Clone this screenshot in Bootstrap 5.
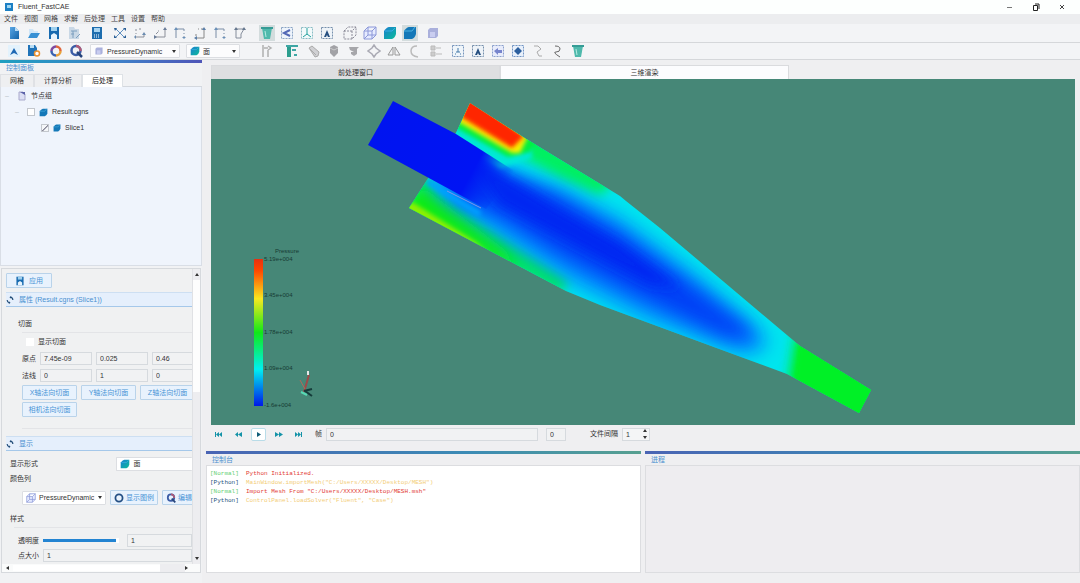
<!DOCTYPE html>
<html lang="zh-CN">
<head>
<meta charset="utf-8">
<meta name="viewport" content="width=device-width, initial-scale=1">
<title>Fluent_FastCAE</title>
<link rel="stylesheet" href="https://cdn.jsdelivr.net/npm/bootstrap@5.3.0/dist/css/bootstrap.min.css">
<script src="https://cdn.jsdelivr.net/npm/bootstrap@5.3.0/dist/js/bootstrap.bundle.min.js"></script>
<style>
body{font-family:"Liberation Sans","Noto Sans CJK SC",sans-serif;font-size:7px;line-height:10px;color:#333;background:#efeff1}
.app{min-height:100vh}
button,input,select{font-family:inherit;font-size:7px;line-height:9px;color:#333}
svg{display:block;flex:none}
.titlebar{height:14px;background:#fdfffe;padding:0 4px}
.titlebar .wbtn{width:26px;height:14px;border:0;background:none;padding:0 8px}
.menubar{height:10px;background:#ecedef;padding-left:4px;gap:6px}
.menubar a{color:#444;text-decoration:none}
.tools{background:#f3f4f6;border-bottom:1px solid #d5d7da;padding-left:6px;gap:7px}
.tools-a{height:19px}
.tools-b{height:17px;gap:6px}
.tgroup{display:flex;gap:4px}
.tb{width:16px;height:16px;padding:1px;border:0;background:none}
.tb svg{width:14px;height:14px}
.tb.on{background:#d3dcdd}
.pick{height:14px;border:1px solid #dcdee2;background:#fcfcfd;border-radius:1px;padding:0 3px;gap:3px}
.pick svg{width:10px;height:10px}
.pick select{appearance:none;border:0;background:transparent;flex:1;min-width:0;padding:0;height:12px}
.caret{width:0;height:0;border:2px solid transparent;border-top:3px solid #333;border-bottom:0}
.side{width:202px;background:#f1f2f4}
.side-line{height:3px;background:linear-gradient(90deg,#1e9fc0,#3f7fc8 60%,#4f55b8)}
.ptitle{color:#4a8fd0;height:11px;padding-left:6px}
.side .nav-tabs{border-color:#d4d8de;height:13px}
.side .nav-link{font-size:7px;line-height:10px;padding:1px 9px;border:1px solid #dfe1e5;border-bottom:0;border-radius:0;color:#333;background:#eeeff1}
.side .nav-link.active{background:#fff;color:#222}
.tree{height:179px;background:#eff4fc;border:1px solid #d9dee6;border-top:0;padding-top:1px}
.trow{height:16px;gap:4px}
.trow .tw{color:#b9bfc8;width:8px}
.trow label{font-size:7px}
.box{width:8px;height:8px;margin:0;border:1px solid #c3c7cd;background:#fff;appearance:none;border-radius:0}
.box:checked{background:#f4f6f8 linear-gradient(135deg,transparent 46%,#889 47%,#889 58%,transparent 59%)}
.props{margin:2px 1px 10px 1px;border:1px solid #d6d9dd;background:#f0f1f2}
.pcontent{overflow:hidden;padding:4px 0 0 4px;min-width:0}
.phead{height:15px;background:#e5effc;border-top:1px solid #cddff2;border-bottom:1px solid #a5c8ea;color:#4a8fd0;gap:5px}
.bbtn{height:15px;border:1px solid #b9d3ea;background:#e8f2fd;color:#4994d6;padding:0 3px;flex:none;border-radius:1px;display:flex;align-items:center;justify-content:center;gap:2px;white-space:nowrap}
.bbtn svg{width:10px;height:10px}
.apply{width:46px;gap:4px}
.axis{width:55px;padding:0}
.prow{height:17px;gap:4px;white-space:nowrap}
.prow-s{height:13px}
.fld{height:13px;border:1px solid #d6dade;background:#f1f2f3;padding:0 3px;min-width:0;border-radius:0}
.fld3{width:52px;flex:none}
.grp{border-top:1px solid #e3e4e7}
.grp-end{height:8px;margin-top:10px}
.vbar{width:8px;background:#ededf0;border-left:1px solid #e0e1e4}
.vbar .thumb{flex:0 0 112px;background:#fdfdfd}
.hbar{height:8px;background:#fafbfb;padding:0 4px}
.hbar .thumb{height:6px;flex:0 0 147px;background:#fff}
.up{width:0;height:0;border:2px solid transparent;border-bottom:3px solid #333;border-top:0}
.lf{border:2px solid transparent;border-right:3px solid #333;border-left:0}
.rt{border:2px solid transparent;border-left:3px solid #333;border-right:0}
.slide{appearance:none;height:12px;width:76px;margin:0;background:transparent}
.slide::-webkit-slider-runnable-track{height:3px;background:#2384d2}
.slide::-webkit-slider-thumb{appearance:none;width:3px;height:5px;margin-top:-1px;background:#fff}
.work{padding:5px 0 10px 4px;min-width:0}
.views{height:14px;margin:0 5px}
.views button{width:289px;border:1px solid #dadbde;border-bottom:0;background:#dedfe1;text-align:center;padding:0}
.views button.on{background:#fcfcfe}
.scene{background:#468777;margin:0 5px;overflow:hidden;min-height:0}
.scene svg{width:100%;height:100%}
.scene text{font-size:6px;fill:#173b34}
.player{height:18px;padding-left:5px;gap:0}
.pl{width:15px;height:13px;margin-right:5px;border:0;background:none;padding:2px 3px;border-radius:2px}
.pl.on{background:#fff;border:1px solid #b9dce8;padding:1px 2px}
.pl svg{width:9px;height:9px}
.spin{height:13px;width:28px;border:1px solid #d6dade;background:#f4f5f6;padding-right:2px}
.spin input{border:0;background:none;width:20px;height:11px;padding:0 3px}
.dock{border:0;border-top:3px solid;border-image:linear-gradient(90deg,#4a64b4,#3b8bb5 60%,#57a090) 1}
.dock h2{font-size:7px;line-height:11px;height:11px;margin:0;padding-left:6px;color:#4a8fd0;font-weight:400}
.log{height:108px;background:#fff;border:1px solid #dcdde0;font-family:"Liberation Mono",monospace;font-size:6px;line-height:9px;padding:3px 0 0 3px;white-space:pre;overflow:hidden}
.info{height:108px;background:#eeedf0;border:1px solid #dcdde0}
.ok{color:#63cf70}.py{color:#23527c}.er{color:#e23a32}.wa{color:#f3cd76}
</style>
</head>
<body>
<svg width="0" height="0" class="position-absolute" aria-hidden="true">
<defs>
<linearGradient id="gb" x1="0" y1="0" x2="1" y2="1"><stop stop-color="#59a7e6"/><stop offset="1" stop-color="#1263a8"/></linearGradient>
<linearGradient id="gt" x1="0" y1="0" x2="1" y2="1"><stop stop-color="#1b7fd0"/><stop offset="1" stop-color="#0bbb9a"/></linearGradient>
<symbol id="i-new" viewBox="0 0 14 14"><path d="M3 1h5l4 4v8H3z" fill="url(#gb)"/><path d="M8 1v4h4z" fill="#b9dcf5"/></symbol>
<symbol id="i-open" viewBox="0 0 14 14"><path d="M2 12V3h4l1 2h4v2H5z" fill="#cfe6f8"/><path d="M1 12l3-5h9l-3 5z" fill="#3790d4"/></symbol>
<symbol id="i-save" viewBox="0 0 14 14"><path d="M2 1h10v12H2z" fill="#176ab0"/><path d="M4 1h6v4H4z" fill="#9fd0ee"/><path d="M4 9l3-2 3 2v4H4z" fill="#e8f4fd"/></symbol>
<symbol id="i-imp" viewBox="0 0 14 14"><path d="M2 1h5l1 2h4v10H2z" fill="#c9d8e6"/><path d="M4 5h6M4 8h3M9 12l4-4M6 12V5" stroke="#7d9fbf" fill="none"/></symbol>
<symbol id="i-calc" viewBox="0 0 14 14"><path d="M2 1h10v12H2z" fill="#1d6dae"/><path d="M4 2h6v4H4z" fill="#a5d3f0"/><path d="M4 9h6M4 11h6" stroke="#fff" stroke-dasharray="1 1"/></symbol>
<symbol id="i-fit" viewBox="0 0 14 14"><path d="M3 3l8 8M11 3l-8 8" stroke="#5f8fc0"/><path d="M1 2h3L2 5zM13 2v3l-3-3zM1 12V9l3 3zM13 12h-3l3-3z" fill="#2b5f96"/></symbol>
<symbol id="i-ax1" viewBox="0 0 14 14"><path d="M3 3v2m0 2v1M6 3h2M2 11h9V8" stroke="#8b8f99" fill="none"/><path d="M1 11l2-2v4zM11 6l2 3H9z" fill="#6a8bb0"/></symbol>
<symbol id="i-ax2" viewBox="0 0 14 14"><path d="M2 11h10V3M5 5h1M3 8l2-2" stroke="#8b8f99" fill="none"/><path d="M1 9v4l3-2zM10 4l2-3 2 3z" fill="#697c98"/></symbol>
<symbol id="i-ax3" viewBox="0 0 14 14"><path d="M3 12V3h8v2M11 7v1M11 10v2" stroke="#7b8da6" fill="none"/><path d="M1 4l2-3 2 3zM9 11h4l-2 2z" fill="#6a90b8"/></symbol>
<symbol id="i-ax4" viewBox="0 0 14 14"><path d="M3 12h8V3H8M6 3H5M3 8v2" stroke="#888" fill="none"/><path d="M9 4l2-3 2 3zM1 12l3-2v4z" fill="#5c7fa8"/></symbol>
<symbol id="i-ax5" viewBox="0 0 14 14"><path d="M3 12V3h8L8 8v4H3" stroke="#858d9b" fill="none"/><path d="M1 4l2-3 2 3zM11 1l2 3h-4z" fill="#66788f"/></symbol>
<symbol id="i-bin" viewBox="0 0 14 14"><path d="M2 2h10l-2 11H4z" fill="#4fb9ac"/><path d="M1 1h12v2H1z" fill="#369c96"/><path d="M5 5l1 6" stroke="#b5ece2"/></symbol>
<symbol id="i-selv" viewBox="0 0 14 14"><rect x="1.500" y="1.500" width="11" height="11" fill="#edf3fb" stroke="#8aa4c4" stroke-dasharray="2 1"/><path d="M10 4L4 7l6 3" stroke="#5268b6" fill="none" stroke-width="2"/></symbol>
<symbol id="i-sela" viewBox="0 0 14 14"><rect x="1.500" y="1.500" width="11" height="11" fill="#f2fafb" stroke="#8abcc4" stroke-dasharray="2 1"/><path d="M7 2v6L3 11M7 8l4 3" stroke="#20a09c" fill="none"/></symbol>
<symbol id="i-selp" viewBox="0 0 14 14"><rect x="1.500" y="1.500" width="11" height="11" fill="#eff5fa" stroke="#7795bd" stroke-dasharray="2 1"/><path d="M7 4v4M5 8h4M4 10h1M9 10h1" stroke="#4278a8" fill="none"/></symbol>
<symbol id="i-selb" viewBox="0 0 14 14"><rect x="1.500" y="1.500" width="11" height="11" fill="#eef3f8" stroke="#7790ad" stroke-dasharray="2 1"/><path d="M4 11l3-7 3 7H8L7 9l-1 2z" fill="#264f80"/></symbol>
<symbol id="i-sels" viewBox="0 0 14 14"><rect x="1.500" y="1.500" width="11" height="11" fill="#e8ecfb" stroke="#8aa0cd" stroke-dasharray="2 1"/><path d="M3 7l4-3v2h4v3H7v2z" fill="#7784cc"/></symbol>
<symbol id="i-selx" viewBox="0 0 14 14"><rect x="1.500" y="1.500" width="11" height="11" fill="#e8f0fb" stroke="#7195c4" stroke-dasharray="2 1"/><path d="M7 3l2 2 2 2-2 2-2 2-2-2-2-2 2-2z" fill="#2c5f9e"/></symbol>
<symbol id="i-wire" viewBox="0 0 14 14"><path d="M1 5l4-4h8v8l-4 4H1zM1 5h8l4-4M9 5v8" fill="none" stroke="#8b8b98" stroke-dasharray="2 1"/></symbol>
<symbol id="i-edge" viewBox="0 0 14 14"><path d="M1 5l4-4h8v8l-4 4H1zM1 5h8l4-4M9 5v8M5 1v8l-4 4M5 9h8" fill="#e6ebff" stroke="#8c98d8"/></symbol>
<symbol id="i-solid" viewBox="0 0 14 14"><path d="M1 5q3-4 5-4h7v7q-1 4-4 5H1z" fill="url(#gt)"/><path d="M2 5h7l3-3" stroke="#3aaee4" fill="none"/></symbol>
<symbol id="i-blue" viewBox="0 0 14 14"><path d="M1 5q3-4 5-4h7v7q-1 4-4 5H1z" fill="#1478b8"/><path d="M1 5h8l3-4" stroke="#4bb0e0" fill="none"/></symbol>
<symbol id="i-pale" viewBox="0 0 14 14"><path d="M2 4l2-2h8v8l-2 2H2z" fill="#aab0dc"/><path d="M4 6h5v5H4z" fill="#c9cdf0"/></symbol>
<symbol id="i-tri" viewBox="0 0 14 14"><path d="M1 1h12v12H1z" fill="#e3f2fc"/><path d="M3 11l4-7 4 7-4-2z" fill="#1e68b4"/></symbol>
<symbol id="i-sgear" viewBox="0 0 14 14"><path d="M1 1h7l2 3v8H1z" fill="#2073b8"/><path d="M3 1h4v3H3z" fill="#b9ddf4"/><circle cx="10" cy="9.500" r="2.500" fill="#fff" stroke="#e99131" stroke-width="1.500"/></symbol>
<symbol id="i-ring" viewBox="0 0 14 14"><g fill="none" stroke-width="2.500"><path d="M7 2.500A4.500 4.500 0 0 1 11.500 7" stroke="#e0673c"/><path d="M11.500 7A4.500 4.500 0 0 1 7 11.500" stroke="#e9a13a"/><path d="M7 11.500A4.500 4.500 0 0 1 2.500 7" stroke="#3a62b0"/><path d="M2.500 7A4.500 4.500 0 0 1 7 2.500" stroke="#7c4aa0"/></g></symbol>
<symbol id="i-ringq" viewBox="0 0 14 14"><circle cx="7" cy="6.500" r="4.500" fill="none" stroke="#3c5da6" stroke-width="2.500"/><path d="M7 2A4.500 4.500 0 0 1 11.500 7" stroke="#b15a76" fill="none" stroke-width="2.500"/><path d="M8 8l5 5" stroke="#26457c" stroke-width="2.500"/></symbol>
<symbol id="i-g1" viewBox="0 0 14 14"><path d="M4 1v12M5 4h4M9 2l3 2-3 2M9 6v7" stroke="#b0b0b0" fill="none" stroke-width="1.500"/></symbol>
<symbol id="i-g2" viewBox="0 0 14 14"><path d="M2 2h4v11H2z" fill="#2c9e8e"/><path d="M1 2h12M7 6h4M9 11h3" stroke="#3fa6a4" stroke-width="2"/></symbol>
<symbol id="i-g3" viewBox="0 0 14 14"><path d="M2 4l3-2 7 6-1 4-3 1z" fill="#d0d0d3" stroke="#aaa"/><path d="M3 5l6 6" stroke="#aaa"/></symbol>
<symbol id="i-g4" viewBox="0 0 14 14"><path d="M3 3l4-2 4 2v6l-4 4-4-4z" fill="#a2a2a6"/><path d="M3 4l4 2 4-2" stroke="#ccc" fill="none"/></symbol>
<symbol id="i-g5" viewBox="0 0 14 14"><path d="M2 3h10L10 5v5l-3 2-3-2V8h3L3 6z" fill="#a6a6aa"/></symbol>
<symbol id="i-g6" viewBox="0 0 14 14"><path d="M7 1l2 3 4 3-4 3-2 3-2-3-4-3 4-3z" fill="none" stroke="#aaaab4" stroke-width="1.500"/></symbol>
<symbol id="i-g7" viewBox="0 0 14 14"><path d="M1 11l5-8v8zM8 3l5 8H8z" fill="none" stroke="#999"/></symbol>
<symbol id="i-g8" viewBox="0 0 14 14"><path d="M10 2Q4 2 4 7t7 6" fill="none" stroke="#bbb" stroke-width="1.500"/></symbol>
<symbol id="i-g9" viewBox="0 0 14 14"><path d="M2 2h4v4H2zM2 8h4v4H2zM7 4h5M7 10h6" fill="#ccc" stroke="#bbb"/></symbol>
<symbol id="i-cv1" viewBox="0 0 14 14"><path d="M3 2h4l3 3-4 3 2 4h3" fill="none" stroke="#aaa"/></symbol>
<symbol id="i-cv2" viewBox="0 0 14 14"><path d="M4 2q5 0 5 3T5 8t4 5" fill="none" stroke="#666"/></symbol>
<symbol id="i-sync" viewBox="0 0 14 14"><path d="M2 7q0 4 4 5M12 7q0-4-4-5" fill="none" stroke="#234d78" stroke-width="2"/><path d="M5 9v5l3-2zM9 0v5L6 2z" fill="#234d78"/></symbol>
<symbol id="i-o" viewBox="0 0 14 14"><circle cx="7" cy="7" r="5" fill="none" stroke="#234f84" stroke-width="2.500"/></symbol>
</defs>
</svg>

<div class="app d-flex flex-column">
<header>
 <div class="titlebar d-flex align-items-center">
  <svg width="10" height="10" viewBox="0 0 10 10"><path d="M1 1h8v8H1z" fill="#1b80c4"/><path d="M3 3h4v3H3z" fill="#9ed7f2"/></svg>
  <span class="ms-1 flex-grow-1">Fluent_FastCAE</span>
  <button class="wbtn" aria-label="最小化"><svg width="8" height="8"><path d="M1 4.500h5" stroke="#777"/></svg></button>
  <button class="wbtn" aria-label="还原"><svg width="8" height="8"><path d="M1.500 2.500h4v5h-4zM3 1h4v5" stroke="#222" fill="none"/></svg></button>
  <button class="wbtn" aria-label="关闭"><svg width="8" height="8"><path d="M2 2l4 4M6 2L2 6" stroke="#444"/></svg></button>
 </div>
 <nav class="menubar d-flex align-items-center">
  <a href="#">文件</a><a href="#">视图</a><a href="#">网格</a><a href="#">求解</a><a href="#">后处理</a><a href="#">工具</a><a href="#">设置</a><a href="#">帮助</a>
 </nav>
 <div class="tools tools-a d-flex align-items-center">
  <div class="tgroup">
   <button class="tb" aria-label="新建"><svg><use href="#i-new"/></svg></button>
   <button class="tb" aria-label="打开"><svg><use href="#i-open"/></svg></button>
   <button class="tb" aria-label="保存"><svg><use href="#i-save"/></svg></button>
   <button class="tb" aria-label="导入"><svg><use href="#i-imp"/></svg></button>
  </div>
  <div class="tgroup"><button class="tb" aria-label="求解"><svg><use href="#i-calc"/></svg></button></div>
  <div class="tgroup">
   <button class="tb" aria-label="适应窗口"><svg><use href="#i-fit"/></svg></button>
   <button class="tb" aria-label="前视图"><svg><use href="#i-ax1"/></svg></button>
   <button class="tb" aria-label="后视图"><svg><use href="#i-ax2"/></svg></button>
   <button class="tb" aria-label="左视图"><svg><use href="#i-ax3"/></svg></button>
   <button class="tb" aria-label="右视图"><svg><use href="#i-ax4"/></svg></button>
   <button class="tb" aria-label="俯视图"><svg><use href="#i-ax3"/></svg></button>
   <button class="tb" aria-label="仰视图"><svg><use href="#i-ax5"/></svg></button>
  </div>
  <div class="tgroup ms-1">
   <button class="tb on" aria-label="清除选择"><svg><use href="#i-bin"/></svg></button>
   <button class="tb" aria-label="选择点"><svg><use href="#i-selv"/></svg></button>
   <button class="tb" aria-label="选择线"><svg><use href="#i-sela"/></svg></button>
   <button class="tb" aria-label="选择面"><svg><use href="#i-selb"/></svg></button>
  </div>
  <div class="tgroup">
   <button class="tb" aria-label="线框"><svg><use href="#i-wire"/></svg></button>
   <button class="tb" aria-label="边"><svg><use href="#i-edge"/></svg></button>
   <button class="tb" aria-label="面"><svg><use href="#i-solid"/></svg></button>
   <button class="tb on" aria-label="面和边"><svg><use href="#i-blue"/></svg></button>
  </div>
  <div class="tgroup"><button class="tb" aria-label="透明"><svg><use href="#i-pale"/></svg></button></div>
 </div>
 <div class="tools tools-b d-flex align-items-center">
  <div class="tgroup">
   <button class="tb" aria-label="导入结果"><svg><use href="#i-tri"/></svg></button>
   <button class="tb" aria-label="保存设置"><svg><use href="#i-sgear"/></svg></button>
  </div>
  <div class="tgroup">
   <button class="tb" aria-label="图例"><svg><use href="#i-ring"/></svg></button>
   <button class="tb" aria-label="编辑图例"><svg><use href="#i-ringq"/></svg></button>
  </div>
  <div class="pick d-flex align-items-center" style="width:90px"><svg><use href="#i-pale"/></svg><select aria-label="变量"><option>PressureDynamic</option></select><i class="caret"></i></div>
  <div class="pick d-flex align-items-center" style="width:54px"><svg><use href="#i-solid"/></svg><select aria-label="显示方式"><option>面</option></select><i class="caret"></i></div>
  <div class="tgroup ms-2 ps-1"><button class="tb" aria-label="探针"><svg><use href="#i-g1"/></svg></button></div>
  <div class="tgroup ms-1"><button class="tb" aria-label="计算器"><svg><use href="#i-g2"/></svg></button></div>
  <div class="tgroup">
   <button class="tb" aria-label="裁剪"><svg><use href="#i-g3"/></svg></button>
   <button class="tb" aria-label="切面"><svg><use href="#i-g4"/></svg></button>
   <button class="tb" aria-label="等值面"><svg><use href="#i-g5"/></svg></button>
   <button class="tb" aria-label="矢量"><svg><use href="#i-g6"/></svg></button>
   <button class="tb" aria-label="镜像"><svg><use href="#i-g7"/></svg></button>
   <button class="tb" aria-label="流线"><svg><use href="#i-g8"/></svg></button>
  </div>
  <div class="tgroup"><button class="tb" aria-label="组合"><svg><use href="#i-g9"/></svg></button></div>
  <div class="tgroup">
   <button class="tb" aria-label="选点"><svg><use href="#i-selp"/></svg></button>
   <button class="tb" aria-label="选单元"><svg><use href="#i-selb"/></svg></button>
   <button class="tb" aria-label="框选"><svg><use href="#i-sels"/></svg></button>
   <button class="tb" aria-label="框选单元"><svg><use href="#i-selx"/></svg></button>
   <button class="tb" aria-label="折线"><svg><use href="#i-cv1"/></svg></button>
   <button class="tb" aria-label="曲线"><svg><use href="#i-cv2"/></svg></button>
   <button class="tb" aria-label="清除"><svg><use href="#i-bin"/></svg></button>
  </div>
 </div>
</header>

<div class="d-flex flex-grow-1">
<aside class="side d-flex flex-column flex-shrink-0">
 <div class="side-line"></div>
 <div class="ptitle">控制面板</div>
 <ul class="nav nav-tabs">
  <li class="nav-item"><a class="nav-link" href="#">网格</a></li>
  <li class="nav-item"><a class="nav-link" href="#">计算分析</a></li>
  <li class="nav-item"><a class="nav-link active" href="#">后处理</a></li>
 </ul>
 <div class="tree">
  <div class="trow d-flex align-items-center ps-1"><span class="tw">–</span>
   <svg width="10" height="10" viewBox="0 0 10 10"><path d="M2 1h4l2 2v6H2z" fill="#dcdff4" stroke="#a9a9cc"/><path d="M3 1h5v3z" fill="#5b62a8"/></svg><span>节点组</span></div>
  <div class="trow d-flex align-items-center" style="padding-left:14px"><span class="tw">–</span>
   <input class="box" type="checkbox" id="c1"><svg width="9" height="9"><use href="#i-blue"/></svg><label for="c1">Result.cgns</label></div>
  <div class="trow d-flex align-items-center" style="padding-left:40px">
   <input class="box" type="checkbox" id="c2" checked><svg width="8" height="8"><use href="#i-blue"/></svg><label for="c2">Slice1</label></div>
 </div>
 <div class="props flex-grow-1 d-flex flex-column">
  <div class="d-flex flex-grow-1">
   <div class="pcontent flex-grow-1">
    <button class="bbtn apply"><svg><use href="#i-save"/></svg>应用</button>
    <div class="phead d-flex align-items-center mt-1 mb-2"><svg width="8" height="8"><use href="#i-sync"/></svg><span>属性 (Result.cgns (Slice1))</span></div>
    <div class="prow d-flex align-items-center ps-2 ms-1">切面</div>
    <div class="grp ms-3">
     <div class="prow d-flex align-items-center"><input class="box border-0 ms-1" type="checkbox" id="c3"><label for="c3">显示切面</label></div>
     <div class="prow d-flex align-items-center"><label for="o1">原点</label><input id="o1" class="fld fld3" value="7.45e-09"><input aria-label="原点 Y" class="fld fld3" value="0.025"><input aria-label="原点 Z" class="fld fld3" value="0.46"></div>
     <div class="prow d-flex align-items-center"><label for="n1">法线</label><input id="n1" class="fld fld3" value="0"><input aria-label="法线 Y" class="fld fld3" value="1"><input aria-label="法线 Z" class="fld fld3" value="0"></div>
     <div class="prow d-flex align-items-center"><button class="bbtn axis">X轴法向切面</button><button class="bbtn axis">Y轴法向切面</button><button class="bbtn axis">Z轴法向切面</button></div>
     <div class="prow d-flex align-items-center"><button class="bbtn axis">相机法向切面</button></div>
    </div>
    <div class="grp grp-end ms-3"></div>
    <div class="phead d-flex align-items-center mb-1"><svg width="8" height="8"><use href="#i-sync"/></svg><span>显示</span></div>
    <div class="prow d-flex align-items-center ps-1"><label for="s1" class="flex-grow-1">显示形式</label><div class="pick bg-white d-flex align-items-center border-end-0" style="width:76px"><svg><use href="#i-solid"/></svg><select id="s1"><option>面</option></select></div></div>
    <div class="prow prow-s d-flex align-items-center ps-1"><label for="s2">颜色列</label></div>
    <div class="prow d-flex align-items-center my-1 ps-3"><div class="pick bg-white d-flex align-items-center flex-shrink-0" style="width:84px"><svg><use href="#i-edge"/></svg><select id="s2"><option>PressureDynamic</option></select><i class="caret"></i></div>
     <button class="bbtn"><svg><use href="#i-o"/></svg>显示图例</button><button class="bbtn"><svg><use href="#i-ringq"/></svg>编辑</button></div>
    <div class="prow d-flex align-items-center ps-1">样式</div>
    <div class="grp ms-2 ps-1">
    <div class="prow d-flex align-items-center mt-1"><label for="r1">透明度</label><input class="slide" id="r1" type="range" value="100"><input aria-label="透明度值" class="fld flex-grow-1 ms-1" value="1" size="4"></div>
    <div class="prow prow-s d-flex align-items-center"><label for="p1">点大小</label><input id="p1" class="fld flex-grow-1" value="1"></div>
    </div>
   </div>
   <div class="vbar d-flex flex-column align-items-center"><i class="up my-1"></i><div class="thumb w-100"></div><div class="flex-grow-1"></div><i class="caret mb-1"></i></div>
  </div>
  <div class="hbar d-flex align-items-center"><i class="lf me-1"></i><div class="thumb"></div><div class="flex-grow-1 align-self-stretch" style="background:#ededf0"></div><i class="rt me-2"></i></div>
 </div>
</aside>

<main class="work flex-grow-1 d-flex flex-column">
 <div class="views d-flex"><button>前处理窗口</button><button class="on">三维渲染</button></div>
 <div class="scene flex-fill d-flex">
 <svg viewBox="211 79 864 346" preserveAspectRatio="xMidYMid meet" role="img" aria-label="Pressure 云图">
  <defs>
   <clipPath id="body"><path d="M470 103L523 137L620 196L626 201L660 228L800 346L871 390L859 413L787 374L600 305L566 291L409 208L427 180L456 133Z"/></clipPath>
   <filter id="b2" x="-20%" y="-20%" width="140%" height="140%"><feGaussianBlur stdDeviation="2"/></filter>
   <filter id="b5" x="-30%" y="-30%" width="160%" height="160%"><feGaussianBlur stdDeviation="6"/></filter>
   <filter id="b7" x="-30%" y="-30%" width="160%" height="160%"><feGaussianBlur stdDeviation="9"/></filter>
   <filter id="b9" x="-30%" y="-30%" width="160%" height="160%"><feGaussianBlur stdDeviation="10"/></filter>
   <linearGradient id="tube" gradientUnits="userSpaceOnUse" x1="380" y1="122" x2="515" y2="196"><stop stop-color="#0014f0"/><stop offset=".68" stop-color="#0014f4"/><stop offset=".92" stop-color="#0028f0" stop-opacity="0"/></linearGradient>
   <linearGradient id="rain" x1="0" y1="0" x2="0" y2="1"><stop stop-color="#e83010"/><stop offset=".08" stop-color="#ff4800"/><stop offset=".27" stop-color="#f8e820"/><stop offset=".5" stop-color="#10e818"/><stop offset=".75" stop-color="#00f0f0"/><stop offset="1" stop-color="#0018e8"/></linearGradient>
  </defs>
  <g clip-path="url(#body)">
   <path d="M380 90H890V430H380z" fill="#00e6ee"/>
   <path d="M420 174L404 208L560 294L570 280L490 226L450 200z" fill="#00ec50" filter="url(#b5)"/>
   <path d="M424 188L404 208L520 272L505 250z" fill="#10ee10" filter="url(#b5)"/>
   <path d="M412 202L404 208L495 260L476 242z" fill="#90f000" filter="url(#b2)"/>
   <path d="M510 150L520 120L615 180L600 196L560 178z" fill="#00f060" filter="url(#b5)"/>
   <path d="M440 150L500 170L560 188L620 218L690 270L755 325L770 345L745 356L650 322L570 282L500 238L430 190z" fill="#0090ff" filter="url(#b9)"/>
   <path d="M455 150L505 172L560 196L620 232L690 283L745 325L756 342L725 338L640 298L560 256L500 218L455 198z" fill="#0040f6" filter="url(#b7)"/>
   <path d="M465 155L510 180L560 210L620 244L680 288L650 284L560 236L500 204z" fill="#0028f2" filter="url(#b5)"/>
   <path d="M464 114L452 136L500 168L532 158L530 130z" fill="#00e8d8" filter="url(#b2)"/>
   <path d="M464 108L455 127L508 157L530 152L540 138z" fill="#00f040" filter="url(#b2)"/>
   <path d="M466 100L457 121L512 153L520 153L528 136z" fill="#f8f000" filter="url(#b2)"/>
   <path d="M466 92L461 117L512 148L524 136z" fill="#ff2800" filter="url(#b2)"/>
   <path d="M796 332L788 384L870 425L885 385z" fill="#00f020" filter="url(#b5)"/>
   <path d="M800 340L795 380L870 425L885 385z" fill="#04f028" filter="url(#b2)"/>
   <path d="M480 214L444 192L428 182" stroke="#00a0ff" stroke-width="5" fill="none" filter="url(#b2)"/>
  </g>
  <path d="M393 101L456 134L516 172L486 209L368 145z" fill="url(#tube)"/>
  <path d="M447 191L481 208" stroke="#7f96e8"/>
  <path d="M254 259h9v147h-9z" fill="url(#rain)"/>
  <text x="275" y="253">Pressure</text>
  <text x="264" y="261">5.19e+004</text>
  <text x="264" y="297">3.45e+004</text>
  <text x="264" y="334">1.78e+004</text>
  <text x="264" y="370">1.09e+004</text>
  <text x="264" y="407">-1.6e+004</text>
  <path d="M304 392l5-17" stroke="#9e4a48" stroke-width="2"/><path d="M305 389l-5-9" stroke="#b06a5a"/><path d="M305 391l7 5M304 391l8-2" stroke="#153c3a" stroke-width="2"/><path d="M301 392l6 3" stroke="#58d8b4" stroke-width="2"/><path d="M308 375v-4" stroke="#e8e8e8" stroke-width="2"/>
 </svg>
 </div>
 <div class="player d-flex align-items-center">
  <button class="pl" aria-label="首帧"><svg viewBox="0 0 9 9"><path d="M1 2h1v5H1zM5 2v5L2 4.500zM8 2v5L5 4.500z" fill="#1493a8"/></svg></button>
  <button class="pl" aria-label="上一帧"><svg viewBox="0 0 9 9"><path d="M4 2v5L1 4.500zM8 2v5L4 4.500z" fill="#1493a8"/></svg></button>
  <button class="pl on" aria-label="播放"><svg viewBox="0 0 9 9"><path d="M3 2v5l4-2.500z" fill="#105c78"/></svg></button>
  <button class="pl" aria-label="下一帧"><svg viewBox="0 0 9 9"><path d="M1 2v5l4-2.500zM5 2v5l4-2.500z" fill="#1493a8"/></svg></button>
  <button class="pl" aria-label="末帧"><svg viewBox="0 0 9 9"><path d="M1 2v5l3-2.500zM4 2v5l3-2.500zM7 2h1v5H7z" fill="#1493a8"/></svg></button>
  <label for="fr" class="ms-1">帧</label><input id="fr" class="fld ms-1" style="width:212px" value="0">
  <input aria-label="当前帧" class="fld ms-2" style="width:20px" value="0">
  <label for="gap" class="ms-4">文件间隔</label>
  <div class="spin d-flex align-items-center ms-1"><input id="gap" value="1"><span class="d-flex flex-column gap-1"><i class="up"></i><i class="caret"></i></span></div>
 </div>
 <div class="d-flex gap-1 mt-2">
  <section class="dock" style="width:50%"><h2>控制台</h2><div class="log"><span class="ok">[Normal]</span>  <span class="er">Python Initialized.</span>
<span class="py">[Python]</span>  <span class="wa">MainWindow.importMesh("C:/Users/XXXXX/Desktop/MESH")</span>
<span class="ok">[Normal]</span>  <span class="er">Import Mesh From "C:/Users/XXXXX/Desktop/MESH.msh"</span>
<span class="py">[Python]</span>  <span class="wa">ControlPanel.loadSolver("Fluent", "Case")</span></div></section>
  <section class="dock" style="width:50%"><h2>进程</h2><div class="info"></div></section>
 </div>
</main>
</div>
</div>
</body>
</html>
